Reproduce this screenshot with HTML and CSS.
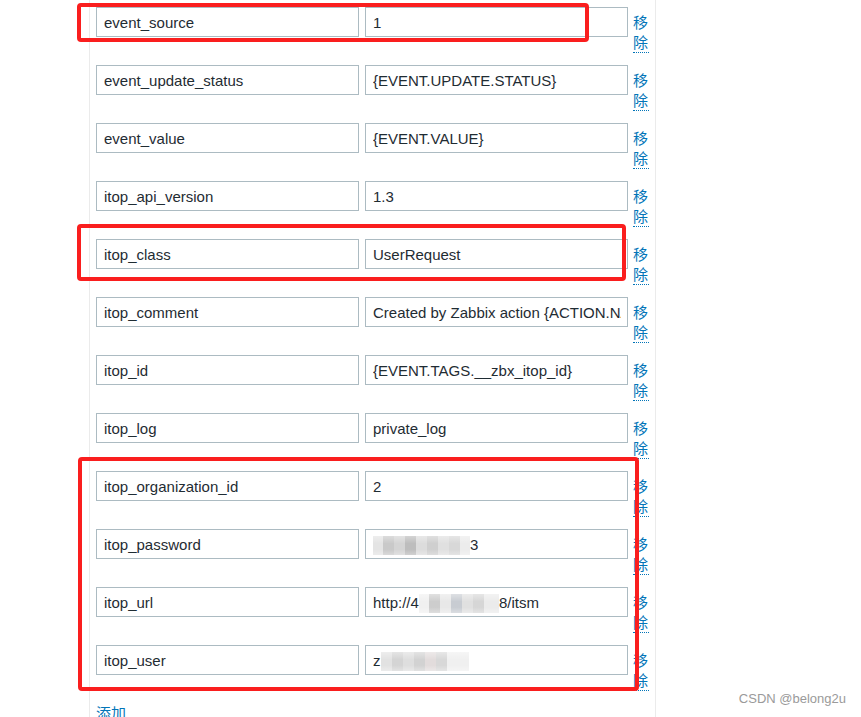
FILE: index.html
```html
<!DOCTYPE html>
<html lang="zh">
<head>
<meta charset="utf-8">
<title>Macros</title>
<link rel="stylesheet" href="styles.css">
</head>
<body>
<div class="panel">
  <div class="row"><div class="field"><span class="txt">event_source</span></div><div class="field"><span class="txt">1</span></div><a class="rm">移除</a></div>
  <div class="row"><div class="field"><span class="txt">event_update_status</span></div><div class="field"><span class="txt">{EVENT.UPDATE.STATUS}</span></div><a class="rm">移除</a></div>
  <div class="row"><div class="field"><span class="txt">event_value</span></div><div class="field"><span class="txt">{EVENT.VALUE}</span></div><a class="rm">移除</a></div>
  <div class="row"><div class="field"><span class="txt">itop_api_version</span></div><div class="field"><span class="txt">1.3</span></div><a class="rm">移除</a></div>
  <div class="row"><div class="field"><span class="txt">itop_class</span></div><div class="field"><span class="txt">UserRequest</span></div><a class="rm">移除</a></div>
  <div class="row"><div class="field"><span class="txt">itop_comment</span></div><div class="field"><span class="txt">Created by Zabbix action {ACTION.NAME}</span></div><a class="rm">移除</a></div>
  <div class="row"><div class="field"><span class="txt">itop_id</span></div><div class="field"><span class="txt">{EVENT.TAGS.__zbx_itop_id}</span></div><a class="rm">移除</a></div>
  <div class="row"><div class="field"><span class="txt">itop_log</span></div><div class="field"><span class="txt">private_log</span></div><a class="rm">移除</a></div>
  <div class="row"><div class="field"><span class="txt">itop_organization_id</span></div><div class="field"><span class="txt">2</span></div><a class="rm">移除</a></div>
  <div class="row"><div class="field"><span class="txt">itop_password</span></div><div class="field"><span class="txt"><span class="mosaic m-pass"></span>3</span></div><a class="rm">移除</a></div>
  <div class="row"><div class="field"><span class="txt">itop_url</span></div><div class="field"><span class="txt">http://4<span class="mosaic m-url"></span>8/itsm</span></div><a class="rm">移除</a></div>
  <div class="row"><div class="field"><span class="txt">itop_user</span></div><div class="field"><span class="txt">z<span class="mosaic m-user"></span></span></div><a class="rm">移除</a></div>
  <div class="add-row"><a class="add">添加</a></div>
</div>

<div class="mark mark-1"></div>
<div class="mark mark-2"></div>
<div class="mark mark-3"></div>

<div class="watermark">CSDN @belong2u</div>
</body>
</html>
```

FILE: styles.css
```css
html, body {
  margin: 0;
  padding: 0;
  background: #ffffff;
  height: 717px;
  overflow: hidden;
}

body {
  position: relative;
  font-family: "Liberation Sans", Arial, "Noto Sans CJK SC", sans-serif;
  font-size: 15px;
  color: #1f2c33;
}

.panel {
  margin-left: 89px;
  width: 559px;
  height: 717px;
  box-sizing: content-box;
  border-left: 1px solid #ebebeb;
  border-right: 1px solid #ebebeb;
  padding: 7px 0 0 6px;
  display: flex;
  flex-direction: column;
}

.row {
  height: 58px;
  flex: none;
  display: flex;
  align-items: flex-start;
}

.field {
  width: 263px;
  height: 30px;
  box-sizing: border-box;
  border: 1px solid #acbbc2;
  background: #ffffff;
  padding: 2px 6px 0 7px;
  line-height: 26px;
  margin-right: 6px;
  overflow: hidden;
}

.field + .field {
  margin-right: 5px;
}

.txt {
  display: block;
  overflow: hidden;
  white-space: nowrap;
}

.rm {
  display: inline-block;
  width: 16px;
  margin-top: 5px;
  font-family: "Noto Sans CJK SC", sans-serif;
  font-size: 15px;
  line-height: 20px;
  color: #0275b8;
  border-bottom: 1px dotted #0275b8;
  word-break: break-all;
}

.add {
  display: inline-block;
  font-family: "Noto Sans CJK SC", sans-serif;
  font-size: 15px;
  line-height: 20px;
  color: #0275b8;
  border-bottom: 1px dotted #0275b8;
}

.mosaic {
  display: inline-block;
  height: 19px;
  vertical-align: -5px;
  filter: blur(0.7px);
  background-image:
    linear-gradient(180deg, rgba(255,255,255,0.35) 0, rgba(255,255,255,0) 40%, rgba(255,255,255,0) 70%, rgba(255,255,255,0.3) 100%),
    linear-gradient(90deg,
      #e4e4e4 0, #e4e4e4 11px,
      #c9c9c9 11px, #c9c9c9 22px,
      #d4d4d4 22px, #d4d4d4 33px,
      #bdbdbd 33px, #bdbdbd 44px,
      #dcdcdc 44px, #dcdcdc 55px,
      #cfcfcf 55px, #cfcfcf 66px,
      #e0e0e0 66px, #e0e0e0 77px,
      #d8d8d8 77px, #d8d8d8 88px,
      #ececec 88px, #ececec 100px);
}

.m-pass {
  width: 98px;
  margin-left: -1px;
}

.m-url {
  width: 80px;
  background-image:
    linear-gradient(180deg, rgba(255,255,255,0.4) 0, rgba(255,255,255,0) 40%, rgba(255,255,255,0) 70%, rgba(255,255,255,0.35) 100%),
    linear-gradient(90deg,
      #f0f0f0 0, #f0f0f0 10px,
      #cdcdcd 10px, #cdcdcd 21px,
      #e8e8e8 21px, #e8e8e8 32px,
      #c8ccd2 32px, #c8ccd2 43px,
      #e0e0e0 43px, #e0e0e0 54px,
      #d6d6d6 54px, #d6d6d6 65px,
      #ebebeb 65px, #ebebeb 80px);
}

.m-user {
  width: 88px;
  background-image:
    linear-gradient(180deg, rgba(255,255,255,0.4) 0, rgba(255,255,255,0) 40%, rgba(255,255,255,0) 70%, rgba(255,255,255,0.35) 100%),
    linear-gradient(90deg,
      #e2e2e2 0, #e2e2e2 11px,
      #d4d4d4 11px, #d4d4d4 22px,
      #dedede 22px, #dedede 33px,
      #d2d2d2 33px, #d2d2d2 44px,
      #e2dcdc 44px, #e2dcdc 55px,
      #d8d8d8 55px, #d8d8d8 66px,
      #f0f0f0 66px, #f0f0f0 88px);
}

/* red annotation rectangles drawn over the form */
.mark {
  position: absolute;
  box-sizing: border-box;
  border: 4px solid #fa1e1e;
  border-radius: 4px;
  pointer-events: none;
}

.mark-1 {
  left: 77px;
  top: 3px;
  width: 512px;
  height: 39px;
}

.mark-2 {
  left: 77px;
  top: 224px;
  width: 549px;
  height: 57px;
}

.mark-3 {
  left: 78px;
  top: 457px;
  width: 561px;
  height: 234px;
}

.watermark {
  position: absolute;
  right: 15px;
  top: 691px;
  font-family: "Liberation Sans", Arial, sans-serif;
  font-size: 13px;
  line-height: 16px;
  color: #9a9a9a;
}
```
